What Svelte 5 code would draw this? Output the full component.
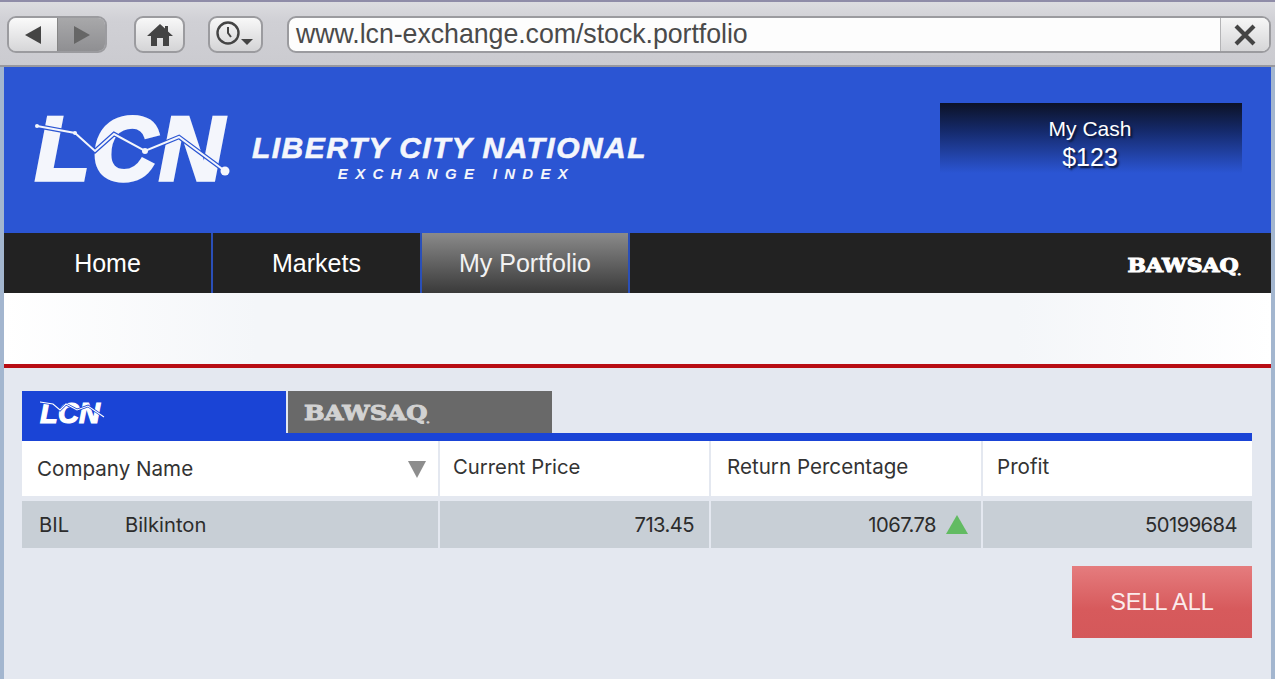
<script lang="ts">
  // stock portfolio page inside the in-game browser frame
  const navItems = [
    { label: 'Home', active: false },
    { label: 'Markets', active: false },
    { label: 'My Portfolio', active: true }
  ];
  const logoPts = '3 2 41 9 61 27 80 10 111 27 145 13 191 47';
  const tabPts = '1 1 14 3 21 9 27 3 38 9 49 5 65 16';
</script>

<div class="page">
  <div class="toolbar">
    <div class="nav-btns">
      <button class="back" aria-label="Back">
        <svg width="16" height="18" viewBox="0 0 16 18"><path d="M0 9 16 0V18Z" fill="#444" /></svg>
      </button>
      <button class="forward" aria-label="Forward">
        <svg width="16" height="18" viewBox="0 0 16 18"><path d="M16 9 0 0V18Z" fill="#666" /></svg>
      </button>
    </div>
    <button class="tool home" aria-label="Home">
      <svg width="28" height="24" viewBox="0 0 28 24"><path d="M14 1 1 13H5V23H11V15H17V23H23V13H27L22 8.4V3H19V5.6Z" fill="#444" /></svg>
    </button>
    <button class="tool history" aria-label="History">
      <svg width="42" height="28" viewBox="0 0 42 28">
        <circle cx="13" cy="12" r="10.5" fill="none" stroke="#444" stroke-width="2.4" />
        <path d="M13 6V12L16 16" fill="none" stroke="#444" stroke-width="2" />
        <path d="M26 18H38L32 24Z" fill="#444" />
      </svg>
    </button>
    <div class="url-wrap">
      <div class="url">www.lcn-exchange.com/stock.portfolio</div>
      <button class="close" aria-label="Stop">
        <svg width="24" height="24" viewBox="0 0 24 24"><path d="M3 3 21 21M21 3 3 21" stroke="#444" stroke-width="4.2" fill="none" /></svg>
      </button>
    </div>
  </div>

  <div class="site">
    <header class="masthead">
      <div class="brand">
        <div class="logo">
          <span class="logo-text">LCN</span>
          <svg class="logo-line" width="200" height="60" viewBox="0 0 200 60">
            <polyline points={logoPts} fill="none" stroke="#2b55d3" stroke-width="4.5" />
            <polyline points={logoPts} fill="none" stroke="#f4f6fc" stroke-width="2" />
            <circle cx="3" cy="2" r="2" fill="#f4f6fc" />
            <circle cx="41" cy="9" r="2" fill="#f4f6fc" />
            <circle cx="111" cy="27" r="3" fill="#f4f6fc" />
            <circle cx="191" cy="47" r="4.5" fill="#f4f6fc" />
          </svg>
        </div>
        <div class="brand-name">
          <div class="brand-title">LIBERTY CITY NATIONAL</div>
          <div class="brand-sub">EXCHANGE INDEX</div>
        </div>
      </div>
      <div class="cash">
        <div class="cash-label">My Cash</div>
        <div class="cash-value">$123</div>
      </div>
    </header>

    <nav class="nav">
      {#each navItems as item}
        <a class="nav-item" class:active={item.active} href="#top">{item.label}</a>
      {/each}
      <span class="bawsaq nav-logo">BAWSAQ<small>.</small></span>
    </nav>

    <div class="banner"></div>

    <main class="content">
      <div class="tabs">
        <div class="tab lcn-tab">
          <span class="tab-lcn">LCN</span>
          <svg class="tab-line" width="68" height="20" viewBox="0 0 68 20">
            <polyline points={tabPts} fill="none" stroke="#1a44d6" stroke-width="2.6" />
            <polyline points={tabPts} fill="none" stroke="#fff" stroke-width="1.1" />
          </svg>
        </div>
        <div class="tab grey-tab"><span class="bawsaq tab-logo">BAWSAQ<small>.</small></span></div>
      </div>

      <div class="table">
        <div class="cell head first">Company Name<i class="sort"></i></div>
        <div class="cell head price">Current Price</div>
        <div class="cell head ret">Return Percentage</div>
        <div class="cell head">Profit</div>

        <div class="cell body company"><span class="sym">BIL</span><span>Bilkinton</span></div>
        <div class="cell body num">713.45</div>
        <div class="cell body num">1067.78<i class="up"></i></div>
        <div class="cell body num">50199684</div>
      </div>

      <div class="actions">
        <button class="sell">SELL ALL</button>
      </div>
    </main>
  </div>
</div>

<style>
  :global(body) {
    margin: 0;
    overflow: hidden;
    background: #a3b6cf;
  }
  .page {
    width: 1275px;
    height: 679px;
    display: flex;
    flex-direction: column;
    overflow: hidden;
    font-family: "Liberation Sans", Arial, sans-serif;
  }
  button {
    padding: 0;
    margin: 0;
    font-family: inherit;
    display: flex;
    align-items: center;
    justify-content: center;
  }

  .toolbar {
    height: 67px;
    flex: none;
    box-sizing: border-box;
    padding: 14px 4px 0 7px;
    display: flex;
    align-items: flex-start;
    background: linear-gradient(#dcdce0, #d0d0d5 30%, #cbcbd0);
    border-top: 2px solid #8f8ca8;
    border-bottom: 2px solid #98989e;
  }
  .nav-btns {
    width: 100px;
    height: 37px;
    display: flex;
    flex: none;
    box-sizing: border-box;
    border: 2px solid #9b9b9f;
    border-radius: 9px;
    overflow: hidden;
  }
  .nav-btns button {
    border: 0;
    height: 100%;
  }
  .back {
    width: 48px;
    background: linear-gradient(#fafafa, #d6d6d8);
  }
  .forward {
    flex: 1;
    border-left: 1px solid #858585 !important;
    background: linear-gradient(#a8a8aa, #8f8f92);
  }
  .tool {
    height: 37px;
    box-sizing: border-box;
    border: 2px solid #9b9b9f;
    border-radius: 9px;
    background: linear-gradient(#f8f8f8, #d4d4d6);
    flex: none;
  }
  .home {
    width: 51px;
    margin-left: 27px;
  }
  .history {
    width: 55px;
    margin-left: 23px;
  }
  .url-wrap {
    margin-left: 24px;
    flex: 1;
    height: 37px;
    box-sizing: border-box;
    display: flex;
    border: 2px solid #9b9b9f;
    border-radius: 9px;
    overflow: hidden;
    background: #fdfdfd;
  }
  .url {
    flex: 1;
    font-size: 26.75px;
    line-height: 33px;
    padding-left: 7px;
    color: #4a4a4a;
    letter-spacing: -0.05px;
  }
  .close {
    width: 49px;
    border: 0;
    border-left: 1px solid #b4b4b6;
    background: linear-gradient(#f6f6f6, #d6d6d8);
  }

  .site {
    flex: 1;
    margin: 0 4px;
    display: flex;
    flex-direction: column;
    min-height: 0;
  }

  .masthead {
    height: 166px;
    flex: none;
    background: #2b55d3;
    display: flex;
    justify-content: space-between;
    align-items: flex-start;
    box-sizing: border-box;
    padding: 36px 29px 0 30px;
  }
  .brand {
    display: flex;
    align-items: flex-start;
  }
  .logo {
    position: relative;
    width: 198px;
    height: 80px;
    flex: none;
  }
  .logo-text {
    display: block;
    padding-left: 1px;
    font-size: 90px;
    line-height: 92px;
    font-weight: 700;
    font-style: italic;
    color: #f4f6fc;
    letter-spacing: 2px;
    -webkit-text-stroke: 3.5px #f4f6fc;
  }
  .logo-line {
    position: absolute;
    left: 0;
    top: 21px;
  }
  .brand-name {
    margin: 29px 0 0 20px;
    text-align: center;
    color: #f4f6fc;
    font-style: italic;
    font-weight: 700;
  }
  .brand-title {
    font-size: 30px;
    line-height: 32px;
    letter-spacing: 1.45px;
    -webkit-text-stroke: 0.6px #f4f6fc;
    white-space: nowrap;
  }
  .brand-sub {
    padding-left: 14px;
    font-size: 15px;
    line-height: 20px;
    letter-spacing: 7.3px;
  }
  .cash {
    width: 302px;
    height: 70px;
    box-sizing: border-box;
    padding: 13px 2px 0 0;
    background: linear-gradient(#0c1226, #152a6c 40%, #2b55d3);
    text-align: center;
    color: #fff;
    text-shadow: 2px 2px 2px #0b1430;
  }
  .cash-label {
    font-size: 21px;
    line-height: 26px;
  }
  .cash-value {
    font-size: 25px;
    line-height: 30px;
  }

  .nav {
    height: 60px;
    flex: none;
    display: flex;
    background: #222;
    align-items: stretch;
  }
  .nav-item {
    width: 209px;
    box-sizing: border-box;
    display: flex;
    align-items: center;
    justify-content: center;
    color: #fff;
    font-size: 25px;
    text-decoration: none;
    border-right: 2px solid #2a4fb8;
  }
  .nav-item.active {
    background: linear-gradient(#8a8a8a, #3a3a3a);
    border-left: 1px solid #2a4fb8;
    color: #f2f2f2;
    margin-left: -1px;
  }
  .bawsaq {
    font-family: "DejaVu Serif", serif;
    font-weight: 700;
    white-space: nowrap;
    display: inline-block;
    transform-origin: left center;
  }
  .bawsaq small {
    font-size: 8px;
    margin-left: -1px;
    vertical-align: -3px;
  }
  .nav-logo {
    margin: 22px 30px auto auto;
    font-size: 18px;
    color: #fff;
    transform-origin: right center;
    transform: scaleX(1.22);
    -webkit-text-stroke: 1px #fff;
  }

  .banner {
    height: 71px;
    flex: none;
    background: linear-gradient(90deg, #fff, #f4f6f9 20%, #f4f6f9 80%, #fff);
  }

  .content {
    flex: 1;
    border-top: 4px solid #b80d14;
    background: #e4e8f0;
    box-sizing: border-box;
    padding: 23px 19px 0 18px;
  }
  .tabs {
    display: flex;
    height: 42px;
    align-items: stretch;
  }
  .tab {
    width: 264px;
    box-sizing: border-box;
    display: flex;
    align-items: center;
  }
  .lcn-tab {
    position: relative;
    background: #1a44d6;
    padding-left: 18px;
    height: 50px;
    padding-bottom: 6px;
  }
  .tab-lcn {
    font-size: 29px;
    line-height: 29px;
    font-weight: 700;
    font-style: italic;
    color: #fff;
    -webkit-text-stroke: 1.2px #fff;
    letter-spacing: 0.2px;
  }
  .tab-line {
    position: absolute;
    left: 17px;
    top: 10px;
  }
  .grey-tab {
    background: #696969;
    margin-left: 2px;
    padding-left: 16px;
    padding-top: 2px;
  }
  .tab-logo {
    font-size: 20px;
    color: #d2d2d2;
    transform: scaleX(1.22);
    -webkit-text-stroke: 0.9px #d2d2d2;
  }

  .table {
    margin-top: 0;
    border-top: 8px solid #1a44d6;
    display: grid;
    grid-template-columns: 416px 269px 270px 1fr;
    grid-template-rows: 55px 47px;
    column-gap: 2px;
    row-gap: 5px;
    color: #2c2c2c;
    font-family: Inter, "Liberation Sans", sans-serif;
    font-size: 20.2px;
  }
  .cell {
    box-sizing: border-box;
    display: flex;
    align-items: center;
  }
  .head {
    background: #fff;
    padding: 0 15px 4px 14px;
    font-size: 20.6px;
    color: #333;
  }
  .head.first {
    padding-left: 15px;
    padding-bottom: 0;
    justify-content: space-between;
  }
  .head.price {
    padding-left: 13px;
    font-size: 20.3px;
  }
  .head.ret {
    padding-left: 16px;
  }
  .sort {
    width: 0;
    height: 0;
    border-left: 9.5px solid transparent;
    border-right: 9.5px solid transparent;
    border-top: 17px solid #8d8d8d;
    margin-right: -3px;
    margin-bottom: -2px;
  }
  .body {
    background: #c8cfd6;
  }
  .company {
    padding-left: 17px;
  }
  .sym {
    width: 86px;
  }
  .num {
    justify-content: flex-end;
    padding-right: 15px;
    letter-spacing: -0.55px;
  }
  .up {
    width: 0;
    height: 0;
    border-left: 11px solid transparent;
    border-right: 11px solid transparent;
    border-bottom: 19px solid #62bb62;
    margin: 0 -2px 0 10px;
  }
  .actions {
    display: flex;
    justify-content: flex-end;
    margin-top: 18px;
  }
  .sell {
    width: 180px;
    height: 72px;
    border: 0;
    background: linear-gradient(#e57c7e, #d75a5c 60%, #d4585a);
    color: #fbecec;
    font-size: 23.5px;
    font-family: "Liberation Sans", sans-serif;
  }
</style>
